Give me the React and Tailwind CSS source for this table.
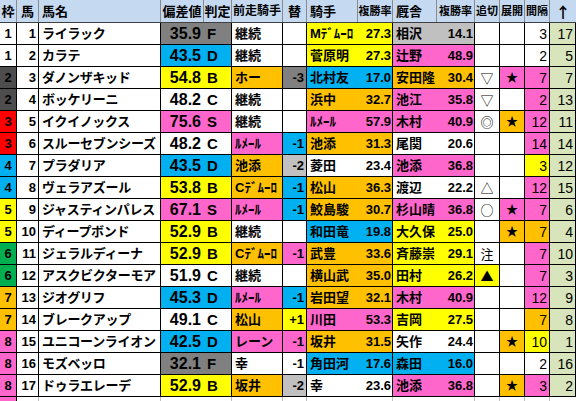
import React from "react";

const BG = {
  w: "bg-white",
  g: "bg-[#808080]",
  b: "bg-[#00b0f0]",
  y: "bg-[#ffff00]",
  o: "bg-[#ffc000]",
  p: "bg-[#ff66cc]",
  l: "bg-[#c0c0c0]",
};

const WAKU = {
  1: "bg-white",
  2: "bg-[#4d4d4d]",
  3: "bg-[#ff0000]",
  4: "bg-[#00b0f0]",
  5: "bg-[#ffff00]",
  6: "bg-[#00b050]",
  7: "bg-[#ffc000]",
  8: "bg-[#ff66cc]",
};

// waku, uma, name, hen, grade, hc, prev, pc, kae, kc, jockey, jrate, jc, stable, srate, sc, oi, oc, ten, tc, int, ic, up
const rows = [
  [1, 1, "ライラック", "35.9", "F", "g", "継続", "w", "", "w", "Mﾃﾞﾑｰﾛ", "27.3", "y", "相沢", "14.1", "l", "", "w", "", "w", "3", "w", "17"],
  [1, 2, "カラテ", "43.5", "D", "b", "継続", "w", "", "w", "菅原明", "27.3", "y", "辻野", "48.9", "p", "", "w", "", "w", "2", "w", "5"],
  [2, 3, "ダノンザキッド", "54.8", "B", "y", "ホー", "o", "-3", "g", "北村友", "17.0", "b", "安田隆", "30.4", "o", "▽", "w", "★", "p", "7", "p", "7"],
  [2, 4, "ボッケリーニ", "48.2", "C", "w", "継続", "w", "", "w", "浜中", "32.7", "o", "池江", "35.8", "p", "▽", "w", "", "w", "2", "p", "13"],
  [3, 5, "イクイノックス", "75.6", "S", "p", "継続", "w", "", "w", "ﾙﾒｰﾙ", "57.9", "p", "木村", "40.9", "p", "◎", "w", "★", "o", "12", "p", "11"],
  [3, 6, "スルーセブンシーズ", "48.2", "C", "w", "ﾙﾒｰﾙ", "p", "-1", "b", "池添", "31.3", "o", "尾関", "20.6", "w", "", "w", "", "w", "14", "p", "14"],
  [4, 7, "プラダリア", "43.5", "D", "b", "池添", "o", "-2", "l", "菱田", "23.4", "w", "池添", "36.8", "p", "", "w", "", "w", "3", "y", "12"],
  [4, 8, "ヴェラアズール", "53.8", "B", "y", "Cﾃﾞﾑｰﾛ", "o", "-1", "b", "松山", "36.3", "o", "渡辺", "22.2", "w", "△", "w", "", "w", "12", "p", "15"],
  [5, 9, "ジャスティンパレス", "67.1", "S", "p", "ﾙﾒｰﾙ", "p", "-1", "b", "鮫島駿", "30.7", "o", "杉山晴", "36.8", "p", "○", "w", "★", "p", "7", "p", "6"],
  [5, 10, "ディープボンド", "52.9", "B", "y", "継続", "w", "", "w", "和田竜", "19.8", "b", "大久保", "25.0", "y", "", "w", "★", "o", "7", "o", "4"],
  [6, 11, "ジェラルディーナ", "52.9", "B", "y", "Cﾃﾞﾑｰﾛ", "o", "-1", "p", "武豊", "33.6", "o", "斉藤崇", "29.1", "y", "注", "w", "", "w", "7", "p", "10"],
  [6, 12, "アスクビクターモア", "51.9", "C", "w", "継続", "w", "", "w", "横山武", "35.0", "o", "田村", "26.2", "y", "▲", "y", "", "w", "7", "p", "3"],
  [7, 13, "ジオグリフ", "45.3", "D", "b", "ﾙﾒｰﾙ", "p", "-1", "b", "岩田望", "32.1", "o", "木村", "40.9", "p", "", "w", "", "w", "12", "p", "9"],
  [7, 14, "ブレークアップ", "49.1", "C", "w", "松山", "o", "+1", "y", "川田", "53.3", "p", "吉岡", "27.5", "y", "", "w", "", "w", "7", "o", "8"],
  [8, 15, "ユニコーンライオン", "42.5", "D", "b", "レーン", "p", "-1", "p", "坂井", "31.5", "o", "矢作", "24.4", "w", "", "w", "★", "o", "10", "y", "1"],
  [8, 16, "モズベッロ", "32.1", "F", "g", "幸", "w", "-1", "w", "角田河", "17.6", "b", "森田", "16.0", "b", "", "w", "", "w", "2", "w", "16"],
  [8, 17, "ドゥラエレーデ", "52.9", "B", "y", "坂井", "o", "-2", "l", "幸", "23.6", "w", "池添", "36.8", "p", "", "w", "★", "o", "3", "p", "2"],
];

function Header() {
  const h = "h-full flex items-center border-r border-[#8a8a8a] shrink-0";
  return (
    <div className="flex w-[576px] h-[23px] bg-[#c5d9f1] border-b border-[#404040] text-[13px] font-bold">
      <div className={`${h} w-[17px] justify-center`}>枠</div>
      <div className={`${h} w-[22px] justify-center`}>馬</div>
      <div className={`${h} w-[122px] pl-[3px]`}>馬名</div>
      <div className={`${h} w-[43px] justify-center`}>偏差値</div>
      <div className={`${h} w-[28px] justify-center`}>判定</div>
      <div className={`${h} w-[51px] justify-center text-[12px]`}>前走騎手</div>
      <div className={`${h} w-[24px] justify-center`}>替</div>
      <div className={`${h} w-[51px] pl-[3px]`}>騎手</div>
      <div className={`${h} w-[35px] justify-center text-[11px]`}>複勝率</div>
      <div className={`${h} w-[44px] pl-[3px]`}>厩舎</div>
      <div className={`${h} w-[38px] justify-center text-[11px]`}>複勝率</div>
      <div className={`${h} w-[25px] justify-center text-[11px]`}>追切</div>
      <div className={`${h} w-[25px] justify-center text-[11px]`}>展開</div>
      <div className={`${h} w-[25px] justify-center text-[11px]`}>間隔</div>
      <div className="h-full w-[26px] shrink-0 flex items-center justify-center text-[15px] text-black font-['Noto_Sans_CJK_JP',sans-serif]">
        <span>↑</span>
      </div>
    </div>
  );
}

function Row({ r }) {
  const [waku, uma, name, hen, grade, hc, prev, pc, kae, kc, jockey, jrate, jc, stable, srate, sc, oi, oc, ten, tc, intv, ic, up] = r;
  const c = "h-full flex items-center border-r border-black shrink-0";
  return (
    <div className="flex h-[22px] border-b border-black text-[13px] font-bold">
      <div className={`${c} w-[17px] justify-center ${WAKU[waku]}`}>{waku}</div>
      <div className={`${c} w-[22px] justify-end pr-[2px]`}>{uma}</div>
      <div className={`${c} w-[122px] pl-[3px] whitespace-nowrap overflow-hidden tracking-[-0.3px]`}>{name}</div>
      <div className={`${c} w-[71px] ${BG[hc]}`}>
        <span className="w-[40px] text-right text-[16px]">{hen}</span>
        <span className="pl-[6px] text-[15px]">{grade}</span>
      </div>
      <div className={`${c} w-[51px] pl-[3px] whitespace-nowrap overflow-hidden ${BG[pc]}`}>{prev}</div>
      <div className={`${c} w-[24px] justify-end pr-[2px] ${BG[kc]}`}>{kae}</div>
      <div className={`${c} w-[86px] ${BG[jc]}`}>
        <span className="w-[51px] pl-[3px] whitespace-nowrap overflow-hidden">{jockey}</span>
        <span className="w-[33px] text-right">{jrate}</span>
      </div>
      <div className={`${c} w-[82px] ${BG[sc]}`}>
        <span className="w-[44px] pl-[3px] whitespace-nowrap">{stable}</span>
        <span className="w-[36px] text-right">{srate}</span>
      </div>
      <div className={`${c} w-[25px] justify-center text-[13px] font-normal font-['Noto_Sans_CJK_JP',sans-serif] ${BG[oc]}`}>{oi}</div>
      <div className={`${c} w-[25px] justify-center text-[12px] ${BG[tc]}`}>{ten}</div>
      <div className={`${c} w-[25px] justify-end pr-[2px] text-[14px] font-normal ${BG[ic]}`}>{intv}</div>
      <div className={`${c} w-[26px] justify-end pr-[2px] text-[14px] font-normal bg-[#d8e4bc]`}>{up}</div>
    </div>
  );
}

export default function App() {
  return (
    <div className="w-[576px] h-[401px] overflow-hidden bg-white text-black font-['Liberation_Sans','Noto_Sans_CJK_JP',sans-serif] leading-none">
      <Header />
      {rows.map((r) => (
        <Row key={r[1]} r={r} />
      ))}
      <div className="flex h-[4px]">
        <div className="w-[17px] h-full bg-[#ff66cc] border-r border-black" />
        <div className="w-[22px] h-full border-r border-[#bfbfbf]" />
        <div className="w-[122px] h-full border-r border-[#bfbfbf]" />
        <div className="w-[71px] h-full border-r border-[#bfbfbf]" />
        <div className="w-[51px] h-full border-r border-[#bfbfbf]" />
        <div className="w-[24px] h-full border-r border-[#bfbfbf]" />
        <div className="w-[86px] h-full border-r border-[#bfbfbf]" />
        <div className="w-[82px] h-full border-r border-[#bfbfbf]" />
        <div className="w-[25px] h-full border-r border-[#bfbfbf]" />
        <div className="w-[25px] h-full border-r border-[#bfbfbf]" />
        <div className="w-[25px] h-full border-r border-[#bfbfbf]" />
      </div>
    </div>
  );
}
